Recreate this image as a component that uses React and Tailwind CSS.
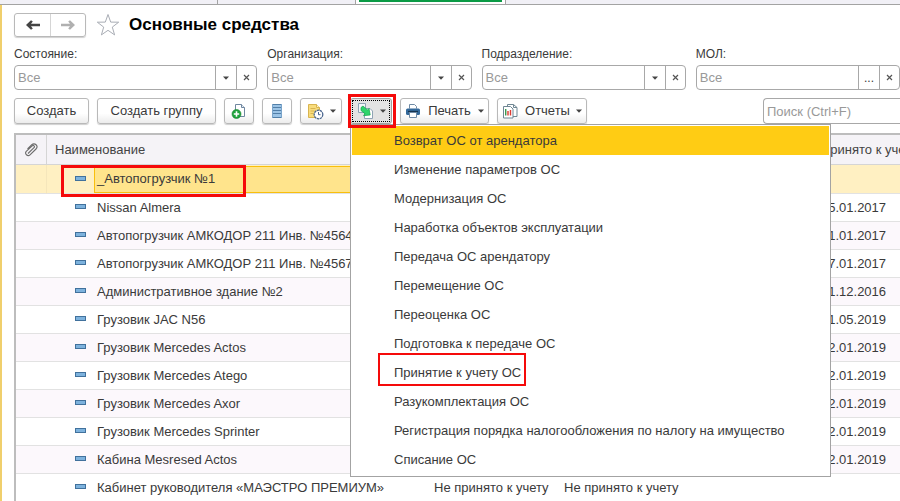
import { useState } from 'react';
import clsx from 'clsx';

const FILTERS = [
  { id: 'state', label: 'Состояние:', picker: 'arrow' },
  { id: 'org', label: 'Организация:', picker: 'arrow' },
  { id: 'dept', label: 'Подразделение:', picker: 'arrow' },
  { id: 'mol', label: 'МОЛ:', picker: 'dots' },
];

const MENU = [
  'Возврат ОС от арендатора',
  'Изменение параметров ОС',
  'Модернизация ОС',
  'Наработка объектов эксплуатации',
  'Передача ОС арендатору',
  'Перемещение ОС',
  'Переоценка ОС',
  'Подготовка к передаче ОС',
  'Принятие к учету ОС',
  'Разукомплектация ОС',
  'Регистрация порядка налогообложения по налогу на имущество',
  'Списание ОС',
];

const ROWS = [
  { name: '_Автопогрузчик №1' },
  { name: 'Nissan Almera', date: '25.01.2017' },
  { name: 'Автопогрузчик АМКОДОР 211 Инв. №45643', date: '31.01.2017' },
  { name: 'Автопогрузчик АМКОДОР 211 Инв. №45678', date: '27.01.2017' },
  { name: 'Административное здание №2', date: '31.12.2016' },
  { name: 'Грузовик JAC N56', date: '31.05.2019' },
  { name: 'Грузовик Mercedes Actos', date: '22.01.2019' },
  { name: 'Грузовик Mercedes Atego', date: '22.01.2019' },
  { name: 'Грузовик Mercedes Axor', date: '22.01.2019' },
  { name: 'Грузовик Mercedes Sprinter', date: '22.01.2019' },
  { name: 'Кабина Mesresed Actos', date: '22.01.2019' },
  { name: 'Кабинет руководителя «МАЭСТРО ПРЕМИУМ»', state: 'Не принято к учету', tax: 'Не принято к учету' },
];

const btn =
  'flex h-[26px] shrink-0 items-center justify-center rounded-[3px] border border-[#b9b9b9] bg-linear-to-b from-white from-60% to-[#ececec] shadow-[0_1px_1px_#d0d0d0]';

function Caret() {
  return (
    <svg width="6" height="4" viewBox="0 0 6 4" className="shrink-0" aria-hidden="true">
      <path d="M0 0.5h6L3 3.8z" fill="#444" />
    </svg>
  );
}

function Arrow({ color, flip }) {
  return (
    <svg width="14" height="10" viewBox="0 0 14 10" className={clsx(flip && 'rotate-180')} aria-hidden="true">
      <path d="M0 5L5 0.3l1.8 1.2L5 3.700h9v2.600H5l1.800 2.200L5 9.700z" fill={color} />
    </svg>
  );
}

function Star() {
  return (
    <svg width="24" height="24" viewBox="0 0 24 24" aria-hidden="true">
      <path
        d="M12 1.5l2.7 7.6 8 .1-6.4 4.9 2.3 7.8-6.6-4.6-6.6 4.6 2.3-7.8L1.3 9.2l8-.1z"
        fill="#fff"
        stroke="#a9adb5"
      />
    </svg>
  );
}

function AddDocIcon() {
  return (
    <svg width="16" height="18" viewBox="0 0 16 18" aria-hidden="true">
      <path d="M4.5 2.5h6l3 3v9h-9z" fill="#fff" stroke="#6f87a0" />
      <path d="M10.5 2.5v3h3" fill="#e4ecf4" stroke="#6f87a0" />
      <circle cx="5.5" cy="12" r="4.5" fill="#1fa33c" stroke="#15852d" strokeWidth="0.6" />
      <path d="M5.5 9.3v5.4M2.8 12h5.4" stroke="#fff" strokeWidth="1.6" />
    </svg>
  );
}

function ListIcon() {
  return (
    <svg width="12" height="16" viewBox="0 0 12 16" aria-hidden="true">
      <rect x="1" y="1" width="10" height="14" fill="#9cc4e6" />
      <path d="M1 1.5h10M1 4.5h10M1 7.5h10M1 10.5h10M1 14.5h10" stroke="#527fa8" />
      <path d="M1.5 1v14M10.5 1v14" stroke="#7ba5cb" />
    </svg>
  );
}

function ScheduleIcon() {
  return (
    <svg width="17" height="17" viewBox="0 0 17 17" aria-hidden="true">
      <path d="M1.5 1.5h8l3 3v10h-11z" fill="#f8dc7c" stroke="#d8b450" />
      <path d="M9.5 1.5v3h3" fill="#fff3c4" stroke="#d8b450" />
      <path d="M3.5 5.5h5M3.5 8h4M3.5 10.5h3" stroke="#d8b450" />
      <circle cx="11.5" cy="11.5" r="4.3" fill="#fff" stroke="#4a668f" strokeWidth="1.3" strokeDasharray="2.4 0.6" />
      <path d="M11.5 9v2.7h2" fill="none" stroke="#4a668f" />
    </svg>
  );
}

function BasisIcon() {
  return (
    <svg width="17" height="18" viewBox="0 0 17 18" aria-hidden="true">
      <path d="M1.5 1.5h7v9h-7z" fill="#f3f6f8" stroke="#8fa3b5" />
      <path d="M7.5 6.5h5.5l2.5 2.5v7.5h-8z" fill="#fff" stroke="#8fa3b5" />
      <path d="M4 5.500l2-1.500 4.500 4 1.500-1.500 1.200 6.500-6.700.7 1.500-2L4 8.500z" fill="#2fd56b" stroke="#17a34c" strokeWidth="0.7" />
    </svg>
  );
}

function PrinterIcon() {
  return (
    <svg width="16" height="16" viewBox="0 0 16 16" aria-hidden="true">
      <path d="M4.5 5.5v-4h5l2 2v2" fill="#fff" stroke="#6f8aa5" />
      <rect x="1" y="5.5" width="14" height="6.5" rx="1.5" fill="#34699a" />
      <path d="M3 8.5h10" stroke="#17344f" strokeWidth="1.2" />
      <path d="M4.5 9.5h7v5h-7z" fill="#fff" stroke="#6f8aa5" />
    </svg>
  );
}

function ReportsIcon() {
  return (
    <svg width="17" height="17" viewBox="0 0 17 17" aria-hidden="true">
      <path d="M5.5 1.5h6l3.5 3v9H5.500z" fill="#fff" stroke="#6f8794" />
      <path d="M11.5 1.5v3H15" fill="none" stroke="#6f8794" />
      <path d="M1.5 3.5h7L11 6v9H1.500z" fill="#fff" stroke="#6f8794" />
      <path d="M3.7 6v6.5" stroke="#3c9a4e" strokeWidth="1.4" />
      <path d="M6 8v4.5M8.500 7v5.500" stroke="#dc3b32" strokeWidth="1.4" />
    </svg>
  );
}

function ClipIcon() {
  return (
    <svg width="14" height="14" viewBox="0 0 14 14" aria-hidden="true">
      <path
        d="M4 10.5l6-5.8a1.3 1.3 0 0 0-1.8-1.9L2.5 8.2a2.5 2.5 0 0 0 3.5 3.6L12 6a3 3 0 0 0-4.2-4.3L3.5 5.8"
        fill="none"
        stroke="#6c6c6c"
        strokeWidth="1.1"
      />
    </svg>
  );
}

function Filter({ id, label, picker }) {
  const [value, setValue] = useState('');
  return (
    <div className="flex min-w-0 flex-col gap-[3px]">
      <label htmlFor={id} className="text-xs leading-4">{label}</label>
      <div className="flex h-[25px] rounded-[4px] border border-[#a8a8a8] bg-white">
        <input
          id={id}
          value={value}
          onChange={(e) => setValue(e.target.value)}
          placeholder="Все"
          className="min-w-0 flex-1 px-[3px] outline-none placeholder:text-[#999]"
        />
        <button aria-label="Выбрать" className="flex w-[21px] items-center justify-center border-l border-[#a8a8a8]">
          {picker === 'arrow' ? <Caret /> : <span className="text-xs">...</span>}
        </button>
        <button
          aria-label="Очистить"
          onClick={() => setValue('')}
          className="flex w-5 items-center justify-center border-l border-[#a8a8a8]"
        >
          <svg width="7" height="7" viewBox="0 0 7 7" aria-hidden="true">
            <path d="M1 1l5 5M6 1L1 6" stroke="#555" strokeWidth="1.2" />
          </svg>
        </button>
      </div>
    </div>
  );
}

function BasisMenu() {
  return (
    <ul className="absolute top-full left-0 z-20 flex h-[353px] w-[481px] flex-col border border-[#a3a3a3] bg-white p-px">
      {MENU.map((item, i) => (
        <li key={item} className="relative flex-1">
          <button
            className={clsx(
              'flex h-full w-full items-center pl-[42px] text-left leading-4 whitespace-nowrap',
              i === 0 && 'bg-[#ffcc14]',
            )}
          >
            {item}
          </button>
          {item === 'Принятие к учету ОС' && (
            <span className="pointer-events-none absolute -top-1.5 left-[26px] h-[33px] w-[148px] border-2 border-[#f50a0a]" />
          )}
        </li>
      ))}
    </ul>
  );
}

function Toolbar() {
  const [open, setOpen] = useState(true);
  return (
    <div className="mt-2 flex items-center gap-2">
      <button className={clsx(btn, 'w-[75px]')}>Создать</button>
      <button className={clsx(btn, 'w-[119px]')}>Создать группу</button>
      <button aria-label="Создать копированием" className={clsx(btn, 'w-[30px]')}><AddDocIcon /></button>
      <button aria-label="Список" className={clsx(btn, 'w-[30px]')}><ListIcon /></button>
      <button aria-label="Отложить" className={clsx(btn, 'w-[42px] gap-1.5')}><ScheduleIcon /><Caret /></button>
      <div className="relative">
        <button
          aria-label="Создать на основании"
          onClick={() => setOpen(!open)}
          className="flex h-[26px] w-[42px] items-center justify-center rounded-[3px] border border-[#a0a0a0] bg-[#e3e3e3] p-px"
        >
          <span className="flex h-full w-full items-center justify-center gap-1.5 border border-dotted border-black">
            <BasisIcon />
            <Caret />
          </span>
        </button>
        {open && <BasisMenu />}
        <span className="pointer-events-none absolute -top-1 -left-0.5 z-30 h-[34px] w-12 border-[3px] border-[#f50a0a]" />
      </div>
      <button className={clsx(btn, 'w-[89px] gap-[7px]')}><PrinterIcon />Печать<Caret /></button>
      <button className={clsx(btn, 'w-[90px] gap-1.5')}><ReportsIcon />Отчеты<Caret /></button>
      <input
        aria-label="Поиск"
        placeholder="Поиск (Ctrl+F)"
        className="ml-auto h-[26px] w-[137px] rounded-l-[4px] border border-r-0 border-[#a8a8a8] px-[3px] outline-none placeholder:text-[#999]"
      />
    </div>
  );
}

function AssetTable() {
  const cell = 'border-b border-[#e2e2e2] p-0';
  return (
    <table className="mt-[9px] w-full table-fixed border-separate border-spacing-0 border-t-2 border-l-2 border-[#bdbdbd] text-left whitespace-nowrap">
      <colgroup>
        <col className="w-[31px]" />
        <col className="w-[380px]" />
        <col className="w-[130px]" />
        <col className="w-[260px]" />
        <col />
      </colgroup>
      <thead>
        <tr className="h-[30px] bg-[#f5f3f7] text-[#444]">
          <th className="border-r border-b border-[#d5d5d5] p-0 pl-2"><ClipIcon /></th>
          <th className="border-b border-[#d5d5d5] p-0 pl-2 font-normal">Наименование</th>
          <th className="border-b border-[#d5d5d5] p-0" />
          <th className="border-b border-[#d5d5d5] p-0" />
          <th className="overflow-hidden border-b border-[#d5d5d5] p-0 pl-1 font-normal">Принято к учету</th>
        </tr>
      </thead>
      <tbody>
        {ROWS.map((row, i) => {
          const selected = i === 0;
          return (
            <tr
              key={row.name}
              className={clsx(selected ? 'h-[29px] bg-[#fff0c2]' : 'h-7', !selected && i % 2 === 0 && 'bg-[#fcf8fc]')}
            >
              <td className={clsx(cell, selected && 'border-r border-r-[#f5e6bb]')} />
              <td className={clsx(cell, 'relative')}>
                <div className="flex h-[27px] items-center pl-7">
                  <span className="mb-0.5 h-[5px] w-[11px] shrink-0 border border-[#41719c] bg-[#7db2dd]" />
                  <span
                    className={clsx(
                      'ml-2 flex h-full flex-1 items-center border pl-0.5',
                      selected ? 'border-[#f9bf0c] bg-[#ffe48c]' : 'border-transparent',
                    )}
                  >
                    {row.name}
                  </span>
                </div>
                {selected && (
                  <span className="pointer-events-none absolute top-0 left-3.5 z-10 h-8 w-[185px] border-[3px] border-[#f50a0a]" />
                )}
              </td>
              <td className={clsx(cell, 'pl-[7px]')}>{row.state}</td>
              <td className={clsx(cell, 'pl-[7px]')}>{row.tax}</td>
              <td className={clsx(cell, 'pl-1')}>{row.date}</td>
            </tr>
          );
        })}
      </tbody>
    </table>
  );
}

export default function App() {
  return (
    <div className="flex h-screen flex-col overflow-hidden bg-white font-['Liberation_Sans',Arial,sans-serif] text-[13px] leading-4 text-[#3a3a3a]">
      <div className="flex h-[5px] shrink-0 border-b border-[#a3a3a3] bg-[#f1f0f6]">
        <div className="w-[218px] border-r border-[#a3a3a3]" />
        <div className="w-[138px] border-r border-[#a3a3a3]" />
        <div className="w-[150px] border-r border-[#a3a3a3] bg-white px-[3px]">
          <div className="h-0.5 bg-[#0b9b46]" />
        </div>
      </div>

      <main className="min-h-0 flex-1 border-l-2 border-[#f0cf6c] pt-2 pl-3">
        <div className="flex items-center">
          <div className="flex h-6 rounded-[3px] border border-[#b9b9b9] shadow-[0_1px_1px_#d0d0d0]">
            <button aria-label="Назад" className="flex w-9 items-center justify-center border-r border-[#d5d5d5]">
              <Arrow color="#444" />
            </button>
            <button aria-label="Вперед" className="flex w-[34px] items-center justify-center">
              <Arrow color="#b0b0b0" flip />
            </button>
          </div>
          <button aria-label="В избранное" className="ml-2.5"><Star /></button>
          <h1 className="ml-[9px] text-[17px] leading-6 font-bold text-black">Основные средства</h1>
        </div>

        <div className="mt-[9px] grid grid-cols-[243fr_204fr_204fr_204fr] gap-2.5">
          {FILTERS.map((f) => (
            <Filter key={f.id} {...f} />
          ))}
        </div>

        <Toolbar />
        <AssetTable />
      </main>
    </div>
  );
}
